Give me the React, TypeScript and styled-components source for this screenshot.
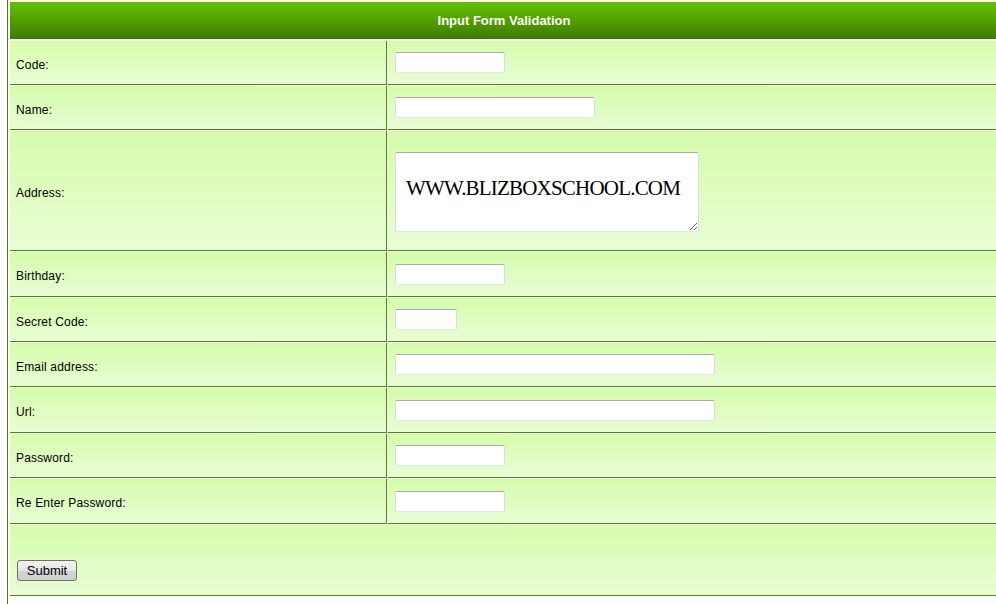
import styled, { createGlobalStyle } from "styled-components";

const GlobalStyle = createGlobalStyle`
  html, body {
    margin: 0;
    padding: 0;
    background: #ffffff;
    overflow: hidden;
  }
  body {
    font-family: "Liberation Sans", Arial, sans-serif;
    font-size: 12px;
    color: #000000;
  }
`;

const Page = styled.div`
  margin-left: 7px;
  border-left: 1px solid #4a7f0c;
  min-height: 100vh;
  padding: 2px 0 0 2px;
  box-sizing: border-box;
`;

const Table = styled.form`
  width: 988px;
  display: flex;
  flex-direction: column;
  gap: 1px;
`;

const Header = styled.div`
  height: 37px;
  margin-bottom: 1px;
  display: flex;
  align-items: center;
  justify-content: center;
  background: linear-gradient(to bottom, #64c200 0%, #3e7b00 100%);
  color: #ffffff;
  font-weight: bold;
  font-size: 13px;
`;

const Row = styled.div<{ $h: number }>`
  display: grid;
  grid-template-columns: 377px 1fr;
  column-gap: 1px;
  height: ${(p) => p.$h}px;
`;

const Cell = styled.div`
  box-sizing: border-box;
  display: flex;
  align-items: center;
  background: linear-gradient(to bottom, #d5fcaa 0%, #e9fdd5 100%);
  border-bottom: 1px solid #4a8a06;
`;

const LabelCell = styled(Cell)`
  border-right: 1px solid #4a8a06;
  padding: 4px 0 0 6px;
  letter-spacing: 0.17px;
`;

const FieldCell = styled(Cell)<{ $top?: number }>`
  padding: ${(p) => p.$top || 0}px 0 0 7px;
`;

const SubmitCell = styled(Cell)`
  grid-column: 1 / -1;
  align-items: flex-start;
  padding: 35px 0 0 7px;
`;

const Input = styled.input<{ $w: number }>`
  box-sizing: border-box;
  width: ${(p) => p.$w}px;
  height: 21px;
  margin: 0;
  padding: 1px 3px;
  background: #ffffff;
  border: 1px solid #dcdcdc;
  border-top-color: #a9a9a9;
  border-bottom-color: #e6e6e6;
  border-radius: 2px;
  font-family: "Liberation Sans", Arial, sans-serif;
  font-size: 12px;
  outline: none;
`;

const TextArea = styled.textarea`
  box-sizing: border-box;
  width: 304px;
  height: 80px;
  margin: 0;
  padding: 23px 8px 0 10px;
  background: #ffffff;
  border: 1px solid #dcdcdc;
  border-top-color: #a9a9a9;
  border-bottom-color: #e6e6e6;
  border-radius: 2px;
  font-family: "Liberation Serif", "Times New Roman", serif;
  font-size: 21px;
  letter-spacing: -0.8px;
  color: #000000;
  outline: none;
  overflow: hidden;
`;

const Button = styled.button`
  box-sizing: border-box;
  width: 60px;
  height: 21px;
  margin: 0;
  padding: 0;
  border: 1px solid #707070;
  border-radius: 3px;
  background: linear-gradient(to bottom, #f3f3f3 0%, #e6e6e6 50%, #d4d4d4 51%, #cfcfcf 100%);
  font-family: "Liberation Sans", Arial, sans-serif;
  font-size: 13px;
  color: #000000;
`;

type Field = { label: string; w: number; h: number; type?: string };

const fields: Field[] = [
  { label: "Code:", w: 110, h: 44 },
  { label: "Name:", w: 200, h: 44 },
];

const moreFields: Field[] = [
  { label: "Birthday:", w: 110, h: 45 },
  { label: "Secret Code:", w: 62, h: 44 },
  { label: "Email address:", w: 320, h: 44 },
  { label: "Url:", w: 320, h: 45 },
  { label: "Password:", w: 110, h: 44, type: "password" },
  { label: "Re Enter Password:", w: 110, h: 45, type: "password" },
];

const FieldRow = ({ label, w, h, type }: Field) => (
  <Row $h={h}>
    <LabelCell>{label}</LabelCell>
    <FieldCell>
      <Input $w={w} type={type || "text"} />
    </FieldCell>
  </Row>
);

const App = () => {
  return (
    <>
      <GlobalStyle />
      <Page>
        <Table onSubmit={(e) => e.preventDefault()}>
          <Header>Input Form Validation</Header>
          {fields.map((f) => (
            <FieldRow key={f.label} {...f} />
          ))}
          <Row $h={120}>
            <LabelCell>Address:</LabelCell>
            <FieldCell $top={3}>
              <TextArea defaultValue="WWW.BLIZBOXSCHOOL.COM" />
            </FieldCell>
          </Row>
          {moreFields.map((f) => (
            <FieldRow key={f.label} {...f} />
          ))}
          <Row $h={71}>
            <SubmitCell>
              <Button type="submit">Submit</Button>
            </SubmitCell>
          </Row>
        </Table>
      </Page>
    </>
  );
};

export default App;
